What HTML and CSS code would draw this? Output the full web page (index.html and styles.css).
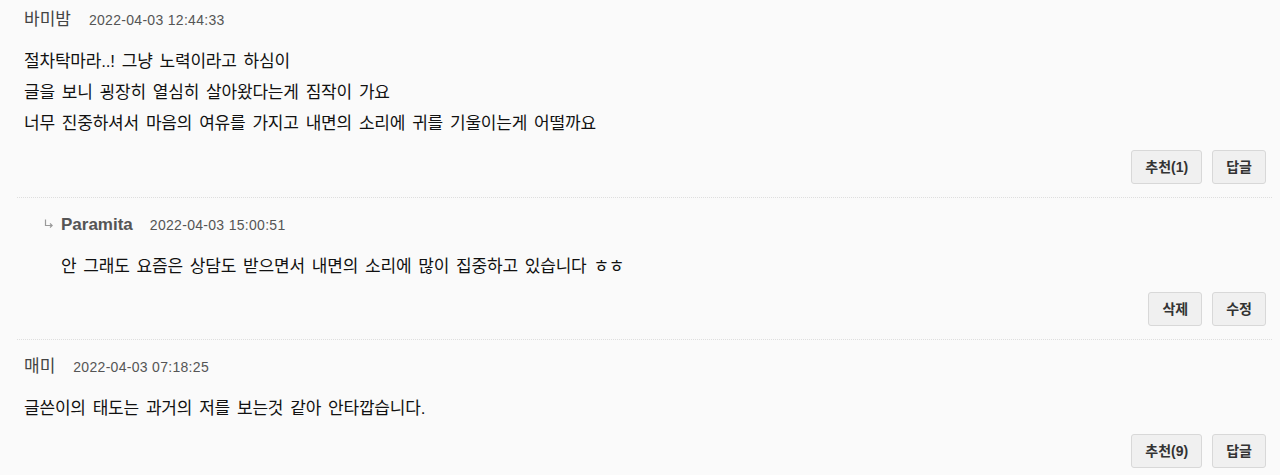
FILE: index.html
```html
<!DOCTYPE html>
<html lang="ko">
<head>
<meta charset="utf-8">
<title>댓글</title>
<link rel="stylesheet" href="styles.css">
</head>
<body>
<div class="comments">
  <div class="comment first">
    <div class="head">
      <span class="name">바미밤</span>
      <span class="date">2022-04-03 12:44:33</span>
    </div>
    <div class="text">
      <p>절차탁마라..! 그냥 노력이라고 하심이</p>
      <p>글을 보니 굉장히 열심히 살아왔다는게 짐작이 가요</p>
      <p>너무 진중하셔서 마음의 여유를 가지고 내면의 소리에 귀를 기울이는게 어떨까요</p>
    </div>
    <div class="actions">
      <button class="btn">추천(1)</button>
      <button class="btn">답글</button>
    </div>
  </div>
  <div class="comment reply">
    <div class="head">
      <svg class="arrow" width="9" height="10" viewBox="0 0 9 10"><path d="M1.5 0.5 V6.5 H8" fill="none" stroke="#9a9a9a" stroke-width="1.2"/><path d="M6 4.5 L8.2 6.5 L6 8.5" fill="none" stroke="#9a9a9a" stroke-width="1.2"/></svg>
      <span class="name latin">Paramita</span>
      <span class="date">2022-04-03 15:00:51</span>
    </div>
    <div class="text">
      <p>안 그래도 요즘은 상담도 받으면서 내면의 소리에 많이 집중하고 있습니다 ㅎㅎ</p>
    </div>
    <div class="actions">
      <button class="btn">삭제</button>
      <button class="btn">수정</button>
    </div>
  </div>
  <div class="comment">
    <div class="head">
      <span class="name">매미</span>
      <span class="date">2022-04-03 07:18:25</span>
    </div>
    <div class="text">
      <p>글쓴이의 태도는 과거의 저를 보는것 같아 안타깝습니다.</p>
    </div>
    <div class="actions">
      <button class="btn">추천(9)</button>
      <button class="btn">답글</button>
    </div>
  </div>
</div>
</body>
</html>
```

FILE: styles.css
```css
html, body {
  margin: 0;
  padding: 0;
  background: #fafafa;
}
body {
  font-family: "Liberation Sans", "Noto Sans CJK KR", sans-serif;
  color: #111;
}
.comments {
  padding: 0 8px 0 17px;
}
.comment {
  padding: 17px 6px 13px 7px;
  border-bottom: 1px dotted #dedede;
}
.comment.first {
  padding-top: 10px;
}
.comment.reply {
  padding-left: 44px;
}
.head {
  display: flex;
  align-items: center;
  height: 20px;
  line-height: 20px;
}
.arrow {
  margin-left: -17px;
  margin-right: 8px;
  margin-top: -2px;
}
.name {
  font-size: 17px;
  color: #444;
  letter-spacing: 0;
  margin-right: 18px;
}
.name.latin {
  font-size: 17px;
  font-weight: bold;
  letter-spacing: 0;
  color: #555;
  margin-right: 17px;
}
.date {
  font-size: 14px;
  color: #555;
  letter-spacing: 0.3px;
}
.text {
  margin-top: 16px;
  font-size: 17px;
  line-height: 31px;
  letter-spacing: -0.2px;
  word-spacing: 2.4px;
  color: #111;
}
.text p {
  margin: 0;
}
.actions {
  display: flex;
  justify-content: flex-end;
  gap: 10px;
  margin-top: 10px;
}
.first .actions {
  margin-top: 11px;
}
.btn {
  font-family: "Liberation Sans", "Noto Sans CJK KR", sans-serif;
  font-size: 14px;
  font-weight: bold;
  color: #333;
  background: #f0f0f0;
  border: 1px solid #d8d8d8;
  border-radius: 3px;
  height: 34px;
  line-height: 32px;
  padding: 0 13px;
  margin: 0;
}
```
